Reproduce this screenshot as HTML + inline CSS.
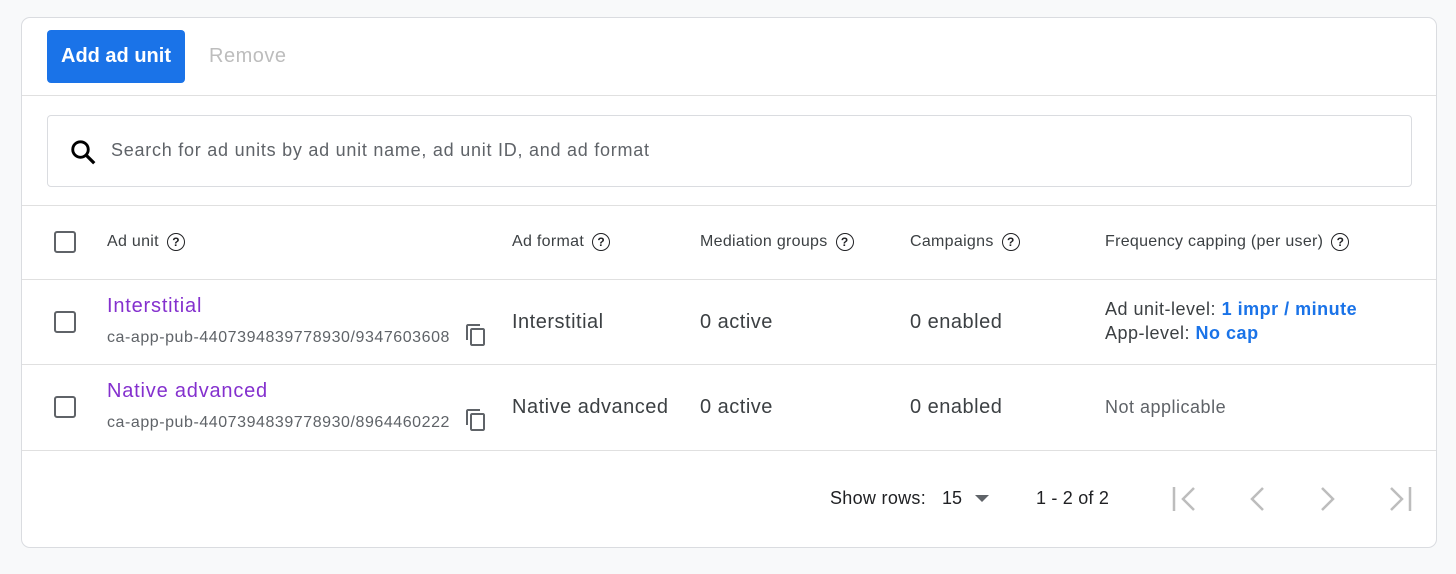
<!DOCTYPE html>
<html><head><style>
body{margin:0;width:1456px;height:574px;background:#f8f9fa;font-family:"Liberation Sans",sans-serif;position:relative;overflow:hidden}
.a{position:absolute;white-space:nowrap}
.card{position:absolute;left:21px;top:17px;width:1414px;height:529px;background:#fff;border:1px solid #dadce0;border-radius:9px}
.hl{position:absolute;left:22px;width:1414px;height:1px;background:#e0e0e0}
.cb{position:absolute;left:54px;width:18px;height:18px;border:2.5px solid #5f6368;border-radius:3px}
.h{font-size:16px;color:#3c4043;top:230px;letter-spacing:0.3px;display:flex;align-items:center;height:24px}
.q{display:inline-block;width:16px;height:16px;border:1.7px solid #202124;border-radius:50%;font-size:12px;line-height:16px;text-align:center;font-weight:bold;margin-left:8px;color:#202124;letter-spacing:0}
.t{font-size:20px;color:#3c4043;letter-spacing:0.5px}
.name{font-size:20px;color:#8430ce;letter-spacing:0.8px}
.id{font-size:16px;color:#5f6368;letter-spacing:0.55px}
.blue{color:#1a73e8;font-weight:bold}
</style></head><body>
<div class="card"></div>
<div class="a" style="left:47px;top:30px;width:138px;height:53px;background:#1a73e8;border-radius:4px;color:#fff;font-size:20px;font-weight:bold;line-height:53px;text-align:center">Add ad unit</div>
<div class="a" style="left:209px;top:45px;font-size:20px;color:#bdbdbd;letter-spacing:0.5px">Remove</div>
<div class="hl" style="top:95px"></div>
<div class="a" style="left:47px;top:115px;width:1363px;height:70px;border:1px solid #dadce0;border-radius:4px"></div>
<svg class="a" style="left:68px;top:137px" width="30" height="30" viewBox="0 0 24 24"><circle cx="10" cy="10" r="6.2" fill="none" stroke="#000" stroke-width="2.3"/><path d="M14.5 14.5L21 21" stroke="#000" stroke-width="2.6"/></svg>
<div class="a" style="left:111px;top:140px;font-size:18px;color:#5f6368;letter-spacing:0.75px">Search for ad units by ad unit name, ad unit ID, and ad format</div>
<div class="hl" style="top:205px"></div>
<div class="cb" style="top:231px"></div>
<div class="a h" style="left:107px">Ad unit<span class="q">?</span></div>
<div class="a h" style="left:512px">Ad format<span class="q">?</span></div>
<div class="a h" style="left:700px">Mediation groups<span class="q">?</span></div>
<div class="a h" style="left:910px">Campaigns<span class="q">?</span></div>
<div class="a h" style="left:1105px">Frequency capping (per user)<span class="q">?</span></div>
<div class="hl" style="top:279px"></div>
<div class="cb" style="top:311px"></div>
<div class="a name" style="left:107px;top:295px">Interstitial</div>
<div class="a id" style="left:107px;top:329px">ca-app-pub-4407394839778930/9347603608</div>
<svg class="a" style="left:464px;top:323px" width="24" height="24" viewBox="0 0 24 24"><path d="M16 1H4c-1.1 0-2 .9-2 2v14h2V3h12V1zm3 4H8c-1.1 0-2 .9-2 2v14c0 1.1.9 2 2 2h11c1.1 0 2-.9 2-2V7c0-1.1-.9-2-2-2zm0 16H8V7h11v14z" fill="#5f6368"/></svg>
<div class="a t" style="left:512px;top:311px">Interstitial</div>
<div class="a t" style="left:700px;top:311px">0 active</div>
<div class="a t" style="left:910px;top:311px">0 enabled</div>
<div class="a t" style="left:1105px;top:299px;font-size:18px">Ad unit-level: <span class="blue">1 impr / minute</span></div>
<div class="a t" style="left:1105px;top:323px;font-size:18px">App-level: <span class="blue">No cap</span></div>
<div class="hl" style="top:364px"></div>
<div class="cb" style="top:396px"></div>
<div class="a name" style="left:107px;top:380px">Native advanced</div>
<div class="a id" style="left:107px;top:414px">ca-app-pub-4407394839778930/8964460222</div>
<svg class="a" style="left:464px;top:408px" width="24" height="24" viewBox="0 0 24 24"><path d="M16 1H4c-1.1 0-2 .9-2 2v14h2V3h12V1zm3 4H8c-1.1 0-2 .9-2 2v14c0 1.1.9 2 2 2h11c1.1 0 2-.9 2-2V7c0-1.1-.9-2-2-2zm0 16H8V7h11v14z" fill="#5f6368"/></svg>
<div class="a t" style="left:512px;top:396px">Native advanced</div>
<div class="a t" style="left:700px;top:396px">0 active</div>
<div class="a t" style="left:910px;top:396px">0 enabled</div>
<div class="a t" style="left:1105px;top:397px;font-size:18px;color:#5f6368">Not applicable</div>
<div class="hl" style="top:450px"></div>
<div class="a" style="left:830px;top:488px;font-size:18px;color:#202124;letter-spacing:0.3px">Show rows:</div>
<div class="a" style="left:942px;top:488px;font-size:18px;color:#202124">15</div>
<svg class="a" style="left:974px;top:494px" width="16" height="10"><path d="M1 1h14L8 8z" fill="#5f6368"/></svg>
<div class="a" style="left:1036px;top:488px;font-size:18px;color:#202124;letter-spacing:0.2px">1 - 2 of 2</div>
<svg class="a" style="left:1170px;top:485px" width="250" height="28" viewBox="0 0 250 28" fill="none" stroke="#bdbdbd" stroke-width="2.5"><path d="M4 2v24M24 3L13 14l11 11"/><path d="M93 3L82 14l11 11"/><path d="M152 3l11 11-11 11"/><path d="M221 3l11 11-11 11M240 2v24"/></svg>
</body></html>
